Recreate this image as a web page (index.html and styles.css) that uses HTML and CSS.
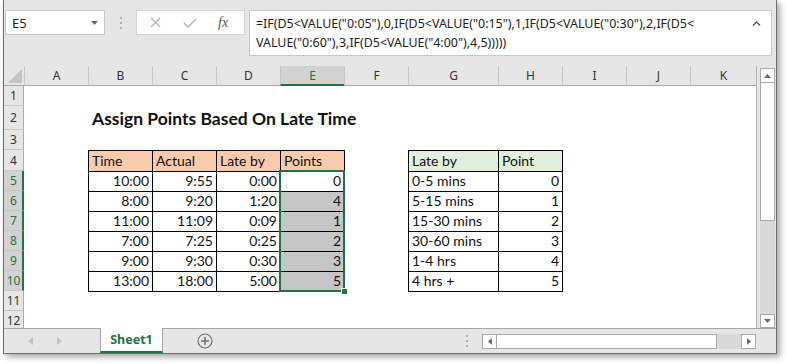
FILE: index.html
```html
<!DOCTYPE html>
<html>
<head>
<meta charset="utf-8">
<link rel="stylesheet" href="styles.css">
</head>
<body>
<div class="window">
  <div class="fbar">
    <div class="namebox"><span>E5</span><svg class="dd" width="7" height="4" viewBox="0 0 7 4"><path d="M0 0h7L3.5 4z" fill="#6a6a6a"/></svg></div>
    <div class="vdots"><i></i><i></i><i></i></div>
    <div class="fbtns">
      <svg class="ix" width="11" height="11" viewBox="0 0 11 11"><path d="M1 1L10 10M10 1L1 10" stroke="#b4b4b4" stroke-width="1.3" fill="none"/></svg>
      <svg class="ic" width="14" height="10" viewBox="0 0 14 10"><path d="M1 5l4 4L13 1" stroke="#b4b4b4" stroke-width="1.6" fill="none"/></svg>
      <span class="fx">fx</span>
    </div>
    <div class="formula">
      <div class="ftext">=IF(D5&lt;VALUE("0:05"),0,IF(D5&lt;VALUE("0:15"),1,IF(D5&lt;VALUE("0:30"),2,IF(D5&lt;<br>VALUE("0:60"),3,IF(D5&lt;VALUE("4:00"),4,5)))))</div>
      <svg class="caret" width="9" height="5" viewBox="0 0 9 5"><path d="M1 4.5L4.5 1L8 4.5" stroke="#555" stroke-width="1.4" fill="none"/></svg>
    </div>
  </div>
  <div class="main">
    <div class="sheet">
      <div class="colheads">
        <div class="corner"><svg width="14" height="14" viewBox="0 0 14 14"><path d="M14 0V14H0z" fill="#c4c4c4"/></svg></div>
        <div class="ch">A</div>
        <div class="ch">B</div>
        <div class="ch">C</div>
        <div class="ch">D</div>
        <div class="ch on">E</div>
        <div class="ch">F</div>
        <div class="ch wide">G</div>
        <div class="ch">H</div>
        <div class="ch">I</div>
        <div class="ch">J</div>
        <div class="ch last">K</div>
      </div>
      <div class="sbody">
        <div class="rowheads">
          <div class="rh">1</div>
          <div class="rh r2">2</div>
          <div class="rh">3</div>
          <div class="rh r4">4</div>
          <div class="rh on">5</div>
          <div class="rh on">6</div>
          <div class="rh on">7</div>
          <div class="rh on">8</div>
          <div class="rh on">9</div>
          <div class="rh on">10</div>
          <div class="rh">11</div>
          <div class="rh">12</div>
        </div>
        <div class="cells">
          <div class="title">Assign Points Based On Late Time</div>
          <table class="tb t1">
            <tr class="hd"><td>Time</td><td>Actual</td><td>Late by</td><td>Points</td></tr>
            <tr><td class="r">10:00</td><td class="r">9:55</td><td class="r">0:00</td><td class="r">0</td></tr>
            <tr><td class="r">8:00</td><td class="r">9:20</td><td class="r">1:20</td><td class="r g">4</td></tr>
            <tr><td class="r">11:00</td><td class="r">11:09</td><td class="r">0:09</td><td class="r g">1</td></tr>
            <tr><td class="r">7:00</td><td class="r">7:25</td><td class="r">0:25</td><td class="r g">2</td></tr>
            <tr><td class="r">9:00</td><td class="r">9:30</td><td class="r">0:30</td><td class="r g">3</td></tr>
            <tr class="lr"><td class="r">13:00</td><td class="r">18:00</td><td class="r">5:00</td><td class="r g">5</td></tr>
          </table>
          <table class="tb t2">
            <tr class="hd"><td>Late by</td><td>Point</td></tr>
            <tr><td>0-5 mins</td><td class="r">0</td></tr>
            <tr><td>5-15 mins</td><td class="r">1</td></tr>
            <tr><td>15-30 mins</td><td class="r">2</td></tr>
            <tr><td>30-60 mins</td><td class="r">3</td></tr>
            <tr><td>1-4 hrs</td><td class="r">4</td></tr>
            <tr class="lr"><td>4 hrs +</td><td class="r">5</td></tr>
          </table>
          <div class="sel"><span class="handle"></span></div>
        </div>
      </div>
    </div>
    <div class="vscroll">
      <div class="sbtn"><svg width="7" height="4" viewBox="0 0 7 4"><path d="M0 4h7L3.5 0z" fill="#6a6a6a"/></svg></div>
      <div class="thumb"></div>
      <div class="track"></div>
      <div class="sbtn dn"><svg width="7" height="4" viewBox="0 0 7 4"><path d="M0 0h7L3.5 4z" fill="#6a6a6a"/></svg></div>
    </div>
  </div>
  <div class="tabbar">
    <div class="nav">
      <svg class="nl" width="5" height="8" viewBox="0 0 5 8"><path d="M5 0V8L0 4z" fill="#c2c2c2"/></svg>
      <svg class="nr" width="5" height="8" viewBox="0 0 5 8"><path d="M0 0V8L5 4z" fill="#c2c2c2"/></svg>
    </div>
    <div class="tab">Sheet1</div>
    <div class="rest">
      <svg class="plus" width="16" height="16" viewBox="0 0 16 16"><circle cx="8" cy="8" r="7" fill="none" stroke="#727272" stroke-width="1.2"/><path d="M8 4V12M4 8H12" stroke="#727272" stroke-width="1.6"/></svg>
      <div class="hdots"><i></i><i></i><i></i></div>
      <div class="hscroll">
        <div class="hbtn"><svg width="4" height="7" viewBox="0 0 4 7"><path d="M4 0V7L0 3.5z" fill="#6a6a6a"/></svg></div>
        <div class="hthumb"></div>
        <div class="htrack"></div>
        <div class="hbtn"><svg width="4" height="7" viewBox="0 0 4 7"><path d="M0 0V7L4 3.5z" fill="#6a6a6a"/></svg></div>
      </div>
    </div>
  </div>
</div>
</body>
</html>
```

FILE: styles.css
```css
html, body {
  margin: 0;
  padding: 0;
  background: #ffffff;
}
body {
  width: 786px;
  height: 364px;
  overflow: hidden;
  font-family: "Noto Sans", sans-serif;
}
.window {
  margin-left: 3px;
  width: 772px;
  height: 353px;
  border: 1px solid #6e6e6e;
  border-top: none;
  background: #e6e6e6;
  box-shadow: 3px 3px 6px rgba(0, 0, 0, 0.35);
  display: flex;
  flex-direction: column;
}
/* formula bar */
.fbar {
  height: 66px;
  flex: none;
  display: flex;
  align-items: flex-start;
  padding-top: 10px;
  box-sizing: border-box;
}
.namebox {
  margin-left: 1px;
  width: 100px;
  height: 25px;
  box-sizing: border-box;
  background: #fff;
  border: 1px solid #c8c8c8;
  display: flex;
  align-items: center;
  justify-content: space-between;
  padding: 0 6px 0 6px;
  font-size: 13px;
  color: #222;
}
.vdots {
  margin-left: 15px;
  margin-top: 7px;
  display: flex;
  flex-direction: column;
  gap: 3px;
}
.vdots i, .hdots i {
  display: block;
  width: 2px;
  height: 2px;
  background: #b0b0b0;
}
.fbtns {
  margin-left: 14px;
  width: 109px;
  height: 25px;
  box-sizing: border-box;
  background: #fff;
  border: 1px solid #d4d4d4;
  display: flex;
  align-items: center;
}
.ix { margin-left: 13px; }
.ic { margin-left: 22px; }
.fx {
  margin-left: 21px;
  font-family: "Liberation Serif", serif;
  font-style: italic;
  font-size: 14px;
  color: #555;
}
.formula {
  margin-left: 4px;
  width: 523px;
  height: 46px;
  box-sizing: border-box;
  background: #fff;
  border: 1px solid #c8c8c8;
  position: relative;
  padding: 3px 0 0 6px;
}
.ftext {
  font-size: 12.45px;
  line-height: 19px;
  color: #222;
  white-space: nowrap;
}
.caret {
  position: absolute;
  right: 10px;
  top: 10px;
}
/* sheet */
.main {
  height: 262px;
  flex: none;
  display: flex;
}
.sheet {
  width: 753px;
  box-sizing: border-box;
  border-right: 1px solid #b4b4b4;
  background: #fff;
  display: flex;
  flex-direction: column;
  overflow: hidden;
}
.colheads {
  height: 20px;
  flex: none;
  display: flex;
  background: #e6e6e6;
}
.corner {
  width: 20px;
  height: 20px;
  box-sizing: border-box;
  border-bottom: 1px solid #ababab;
  display: flex;
  align-items: flex-end;
  justify-content: flex-end;
  padding: 0 2px 2px 0;
}
.ch {
  width: 64px;
  flex: none;
  height: 20px;
  box-sizing: border-box;
  border-left: 1px solid #c6c6c6;
  border-bottom: 1px solid #ababab;
  text-align: center;
  font-size: 12px;
  line-height: 19px;
  color: #333;
}
.ch.wide { width: 90px; }
.ch.last { flex: 1; }
.ch.on {
  background: #d2d2d2;
  color: #217346;
  border-bottom: 2px solid #217346;
}
.sbody {
  display: flex;
  flex: 1;
  overflow: hidden;
}
.rowheads {
  width: 20px;
  flex: none;
  background: #e6e6e6;
}
.rh {
  height: 20px;
  box-sizing: border-box;
  border-bottom: 1px solid #c6c6c6;
  border-right: 1px solid #ababab;
  text-align: center;
  font-size: 12px;
  line-height: 20px;
  color: #333;
}
.rh.r2 { height: 24px; line-height: 24px; }
.rh.r4 { height: 21px; line-height: 21px; }
.rh.on {
  background: #d2d2d2;
  color: #217346;
  border-right: 2px solid #217346;
  padding-left: 1px;
}
.cells {
  flex: 1;
  position: relative;
  display: grid;
  grid-template-columns: repeat(6, 64px) 90px repeat(3, 64px) 1fr;
  grid-template-rows: 20px 24px 20px 21px repeat(8, 20px);
  font-family: Lato, "Noto Sans", sans-serif;
  color: #111;
}
.title {
  grid-column: 2 / 8;
  grid-row: 2;
  align-self: center;
  padding-left: 4px;
  font-weight: bold;
  font-size: 17.5px;
  white-space: nowrap;
}
.tb {
  border-collapse: separate;
  border-spacing: 0;
  table-layout: fixed;
  align-self: start;
  grid-row: 4 / 11;
  font-size: 14px;
}
.t1 { grid-column: 2 / 6; width: 257px; }
.t2 { grid-column: 7 / 9; width: 155px; }
.tb td {
  border-left: 1px solid #000;
  border-top: 1px solid #000;
  padding: 0 3px 1px 3px;
  line-height: 18px;
  vertical-align: bottom;
  white-space: nowrap;
  overflow: hidden;
  box-sizing: border-box;
}
.t1 td { width: 64px; }
.t2 td:first-child { width: 90px; }
.t2 td:last-child { width: 65px; }
.t1 td:last-child { width: 65px; }
.tb td:last-child { border-right: 1px solid #000; }
.tb tr { height: 20px; }
.tb tr.hd { height: 21px; }
.tb tr.lr { height: 21px; }
.tb tr.lr td { border-bottom: 1px solid #000; }
.t1 tr.hd td { background: #f8cbad; }
.t2 tr.hd td { background: #e2efda; }
.tb td.r { text-align: right; }
.tb td.g { background: #c6c6c6; }
.sel {
  position: absolute;
  left: 255px;
  top: 84px;
  width: 66px;
  height: 122px;
  box-sizing: border-box;
  border: 2px solid #217346;
}
.handle {
  position: absolute;
  right: -4px;
  bottom: -4px;
  width: 5px;
  height: 5px;
  background: #217346;
  box-shadow: 0 0 0 1px #fff;
}
/* vertical scrollbar */
.vscroll {
  width: 15px;
  margin-left: 3px;
  margin-top: 2px;
  display: flex;
  flex-direction: column;
}
.sbtn {
  height: 15px;
  flex: none;
  box-sizing: border-box;
  background: #fff;
  border: 1px solid #ababab;
  display: flex;
  align-items: center;
  justify-content: center;
}
.sbtn.dn { height: 14px; }
.thumb {
  height: 138px;
  flex: none;
  box-sizing: border-box;
  background: #fff;
  border: 1px solid #ababab;
  border-top: none;
}
.track {
  flex: 1;
  background: #d9d9d9;
}
/* tabs */
.tabbar {
  height: 25px;
  flex: none;
  display: flex;
}
.nav {
  width: 96px;
  box-sizing: border-box;
  border-top: 1px solid #a6a6a6;
  display: flex;
  align-items: center;
}
.nl { margin-left: 24px; }
.nr { margin-left: 24px; }
.tab {
  width: 63px;
  box-sizing: border-box;
  background: #fff;
  border-left: 1px solid #a6a6a6;
  border-right: 1px solid #a6a6a6;
  border-bottom: 2px solid #217346;
  text-align: center;
  font-weight: bold;
  font-size: 12.5px;
  line-height: 24px;
  color: #217346;
}
.rest {
  flex: 1;
  box-sizing: border-box;
  border-top: 1px solid #a6a6a6;
  display: flex;
  align-items: center;
}
.plus { margin-left: 34px; }
.hdots {
  margin-left: 253px;
  display: flex;
  flex-direction: column;
  gap: 3px;
}
.hscroll {
  margin-left: 14px;
  width: 274px;
  height: 15px;
  margin-top: 1px;
  display: flex;
}
.hbtn {
  width: 15px;
  flex: none;
  box-sizing: border-box;
  background: #fff;
  border: 1px solid #ababab;
  display: flex;
  align-items: center;
  justify-content: center;
}
.hthumb {
  width: 220px;
  flex: none;
  box-sizing: border-box;
  background: #fff;
  border: 1px solid #ababab;
  border-left: none;
}
.htrack {
  flex: 1;
  background: #d9d9d9;
}
```
